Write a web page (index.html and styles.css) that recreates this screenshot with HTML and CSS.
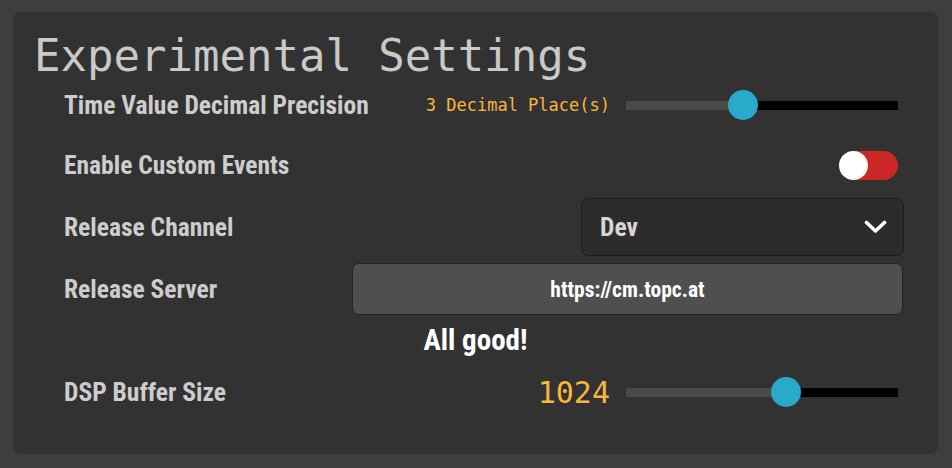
FILE: index.html
```html
<!DOCTYPE html>
<html lang="en">
<head>
    <meta charset="UTF-8">
    <meta name="viewport" content="width=device-width, initial-scale=1.0">
    <title>Experimental Settings</title>
    <link rel="stylesheet" href="styles.css">
</head>
<body>
    <section class="panel">
        <h1 class="panel-title">Experimental Settings</h1>

        <div class="row">
            <span class="label">Time Value Decimal Precision</span>
            <div class="control">
                <span class="value value-small">3 Decimal Place(s)</span>
                <div class="slider">
                    <div class="slider-fill" style="width: 43%"></div>
                    <div class="slider-thumb" style="left: 43%"></div>
                </div>
            </div>
        </div>

        <div class="row">
            <span class="label">Enable Custom Events</span>
            <div class="toggle">
                <div class="toggle-knob"></div>
            </div>
        </div>

        <div class="row">
            <span class="label">Release Channel</span>
            <div class="select">
                <span>Dev</span>
                <svg class="chevron" width="23" height="14" viewBox="0 0 23 14">
                    <polyline points="2.5,2.5 11.5,11 20.5,2.5" fill="none" stroke="#fff" stroke-width="3.6" stroke-linecap="round" stroke-linejoin="round"/>
                </svg>
            </div>
        </div>

        <div class="row">
            <span class="label">Release Server</span>
            <div class="text-input">https://cm.topc.at</div>
        </div>

        <div class="status">All good!</div>

        <div class="row row-last">
            <span class="label">DSP Buffer Size</span>
            <div class="control">
                <span class="value value-big">1024</span>
                <div class="slider">
                    <div class="slider-fill" style="width: 59%"></div>
                    <div class="slider-thumb" style="left: 59%"></div>
                </div>
            </div>
        </div>
    </section>
</body>
</html>
```

FILE: styles.css
```css
/* Palette */
:root {
  --page: #3e3e3e;
  --panel: #323232;
  --text: #cdcdcd;
  --accent: #f6b73a;
  --thumb: #2aaacb;
  --red: #cc2828;
}
body {
  margin: 0;
  padding: 12px 14px 14px 13px;
  background: var(--page);
  font-family: "Roboto Condensed", Roboto, sans-serif;
  font-weight: bold;
  color: var(--text);
}
.panel {
  height: 442px;
  box-sizing: border-box;
  padding: 24px 40px 0 21px;
  background: var(--panel);
  border-radius: 8px;
}
.panel-title {
  margin: 0;
  font-family: "DejaVu Sans Mono", monospace;
  font-weight: normal;
  font-size: 44px;
  line-height: 40px;
  color: #c9c9c9;
}
.row {
  display: flex;
  align-items: center;
  justify-content: space-between;
  height: 62px;
  margin-left: 30px;
}
.row:first-of-type {
  height: 58px;
}
.row-last {
  height: 64px;
}
.label {
  font-size: 25.5px;
  white-space: nowrap;
}
.control {
  display: flex;
  align-items: center;
  gap: 16px;
}
.value {
  font-family: "DejaVu Sans Mono", monospace;
  font-weight: normal;
  white-space: nowrap;
  color: var(--accent);
}
.value-small { font-size: 17px; }
.value-big { font-size: 30px; }

/* Slider */
.slider {
  position: relative;
  width: 272px;
  height: 9px;
  background: #000;
}
.slider-fill {
  height: 100%;
  background: #4a4a4a;
}
.slider-thumb {
  position: absolute;
  top: 50%;
  width: 30px;
  height: 30px;
  border-radius: 50%;
  background: var(--thumb);
  transform: translate(-50%, -50%);
}

/* Toggle */
.toggle {
  width: 59px;
  height: 29px;
  border-radius: 15px;
  background: var(--red);
}
.toggle-knob {
  width: 29px;
  height: 29px;
  border-radius: 50%;
  background: radial-gradient(circle at 45% 45%, #fff 55%, #d9d9d9 100%);
}

/* Select */
.select {
  display: flex;
  align-items: center;
  justify-content: space-between;
  box-sizing: border-box;
  width: 323px;
  height: 58px;
  margin-right: -6px;
  padding: 0 16px 0 18px;
  background: #2c2c2c;
  border: 1px solid #1c1c1c;
  border-radius: 7px;
  font-size: 25.5px;
  color: #d6d6d6;
}

/* Text input */
.text-input {
  display: flex;
  align-items: center;
  justify-content: center;
  box-sizing: border-box;
  width: 551px;
  height: 52px;
  margin-right: -5px;
  background: #4f4f4f;
  border: 1px solid #232323;
  border-radius: 7px;
  font-size: 21.5px;
  color: #fff;
}
.status {
  height: 40px;
  line-height: 40px;
  margin-right: -19px;
  text-align: center;
  font-size: 29px;
  color: #fff;
}
```
